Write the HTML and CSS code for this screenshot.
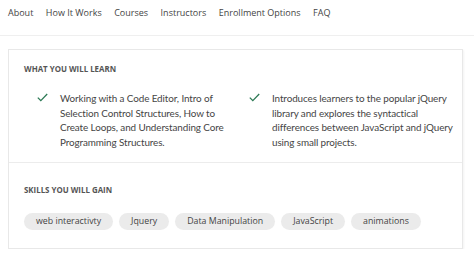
FILE: index.html
```html
<!DOCTYPE html>
<html lang="en">
<head>
  <meta charset="UTF-8">
  <meta name="viewport" content="width=device-width, initial-scale=1.0">
  <title>Course Overview</title>
  <link rel="stylesheet" href="styles.css">
</head>
<body>

<nav class="top-nav">
  <a href="#">About</a>
  <a href="#">How It Works</a>
  <a href="#">Courses</a>
  <a href="#">Instructors</a>
  <a href="#">Enrollment Options</a>
  <a href="#">FAQ</a>
</nav>

<div class="overview-card">
  <section class="learn-section">
    <h4 class="section-title">What you will learn</h4>
    <ul class="learn-list">
      <li class="learn-item">
        <svg class="check" width="11" height="9" viewBox="0 0 11 9"><path d="M0.8 4.6 L3.8 7.6 L10.2 1" fill="none" stroke="#2d7a55" stroke-width="1.3"/></svg>
        <span>Working with a Code Editor, Intro of Selection Control Structures, How to Create Loops, and Understanding Core Programming Structures.</span>
      </li>
      <li class="learn-item">
        <svg class="check" width="11" height="9" viewBox="0 0 11 9"><path d="M0.8 4.6 L3.8 7.6 L10.2 1" fill="none" stroke="#2d7a55" stroke-width="1.3"/></svg>
        <span>Introduces learners to the popular jQuery library and explores the syntactical differences between JavaScript and jQuery using small projects.</span>
      </li>
    </ul>
  </section>

  <section class="skills-section">
    <h4 class="section-title">Skills you will gain</h4>
    <div class="tags">
      <span class="tag">web interactivty</span>
      <span class="tag">Jquery</span>
      <span class="tag">Data Manipulation</span>
      <span class="tag">JavaScript</span>
      <span class="tag">animations</span>
    </div>
  </section>
</div>

</body>
</html>
```

FILE: styles.css
```css
/* Page */
body {
  margin: 0;
  background-color: #fff;
  font-family: 'Lato', sans-serif;
  color: #444;
}

/* Top Navigation */
.top-nav {
  display: flex;
  gap: 12.5px;
  height: 36px;
  align-items: center;
  padding: 0 8px 10px 8px;
  box-sizing: border-box;
  border-bottom: 1px solid #efefef;
}

.top-nav a {
  font-family: 'Open Sans', sans-serif;
  font-size: 9px;
  color: #444;
  text-decoration: none;
}

/* Overview Card */
.overview-card {
  margin: 13px 11px 0 8px;
  border: 1px solid #e8e8e8;
  box-shadow: 1px 1px 2px rgba(0, 0, 0, 0.05);
}

.section-title {
  margin: 0;
  font-family: 'Open Sans', sans-serif;
  font-size: 7.9px;
  font-weight: 700;
  text-transform: uppercase;
  color: #555;
}

.learn-section {
  height: 113px;
  box-sizing: border-box;
  padding: 14px 15px 0 15px;
  border-bottom: 1px solid #ececec;
}

.learn-list {
  list-style: none;
  margin: 17px 0 0 0;
  padding: 0;
  display: grid;
  grid-template-columns: 1fr 1fr;
}

.learn-item {
  display: flex;
  align-items: flex-start;
  gap: 12px;
  padding: 0 0 0 13px;
  font-size: 9.9px;
  letter-spacing: -0.1px;
  line-height: 14.5px;
  color: #444;
}

.learn-item span {
  flex-shrink: 0;
  width: 176px;
}

.learn-item:last-child span {
  width: 186px;
}

.check {
  flex-shrink: 0;
  margin-top: 2px;
}

/* Skills */
.skills-section {
  height: 85px;
  box-sizing: border-box;
  padding: 22px 15px 0 15px;
}

.tags {
  display: flex;
  gap: 6px;
  margin-top: 18px;
}

.tag {
  flex-shrink: 0;
  white-space: nowrap;
  font-family: 'Open Sans', sans-serif;
  font-size: 8.8px;
  line-height: 17px;
  padding: 0 12px;
  border-radius: 9px;
  background-color: #ebebeb;
  color: #444;
}
```
